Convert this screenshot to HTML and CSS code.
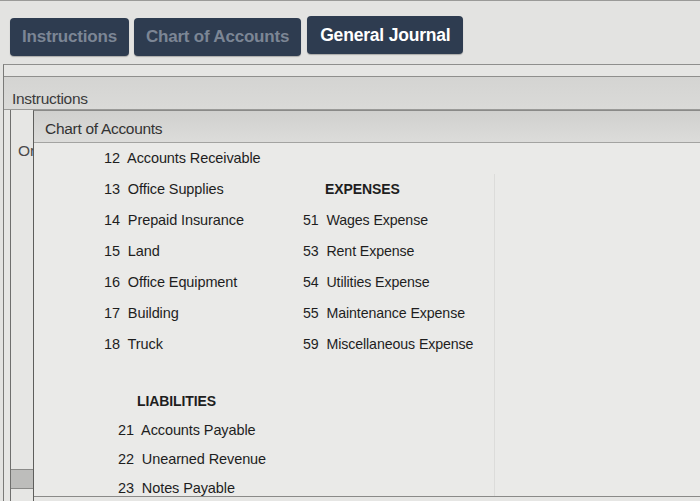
FILE: index.html
```html
<!DOCTYPE html>
<html>
<head>
<meta charset="utf-8">
<link rel="stylesheet" href="styles.css">
</head>
<body>
<div class="topline"></div>
<nav class="tabs">
  <div class="tab">Instructions</div>
  <div class="tab">Chart of Accounts</div>
  <div class="tab active">General Journal</div>
</nav>
<section class="panel">
  <div class="strip"></div>
  <div class="panel-head">Instructions</div>
  <div class="panel-body">
    <div class="instr">
      <p class="instr-text">Or</p>
      <div class="instr-bar"></div>
    </div>
    <div class="chart">
      <div class="chart-head">Chart of Accounts</div>
      <div class="chart-body">
        <div class="col left">
          <div class="row"><span class="num">12</span> Accounts Receivable</div>
          <div class="row"><span class="num">13</span> Office Supplies</div>
          <div class="row"><span class="num">14</span> Prepaid Insurance</div>
          <div class="row"><span class="num">15</span> Land</div>
          <div class="row"><span class="num">16</span> Office Equipment</div>
          <div class="row"><span class="num">17</span> Building</div>
          <div class="row"><span class="num">18</span> Truck</div>
          <div class="group">
            <div class="grow head">LIABILITIES</div>
            <div class="grow"><span class="num">21</span> Accounts Payable</div>
            <div class="grow"><span class="num">22</span> Unearned Revenue</div>
            <div class="grow"><span class="num">23</span> Notes Payable</div>
          </div>
        </div>
        <div class="col right">
          <div class="row head">EXPENSES</div>
          <div class="row"><span class="num">51</span> Wages Expense</div>
          <div class="row"><span class="num">53</span> Rent Expense</div>
          <div class="row"><span class="num">54</span> Utilities Expense</div>
          <div class="row"><span class="num">55</span> Maintenance Expense</div>
          <div class="row"><span class="num">59</span> Miscellaneous Expense</div>
        </div>
        <div class="col rest"></div>
      </div>
    </div>
  </div>
</section>
</body>
</html>
```

FILE: styles.css
```css
html, body {
  margin: 0;
  padding: 0;
  height: 100%;
  overflow: hidden;
}
body {
  background: #e3e3e1;
  font-family: "Liberation Sans", Arial, sans-serif;
  color: #1e1e1e;
}
.topline {
  height: 1px;
  background: #9a9a98;
}
.tabs {
  display: flex;
  gap: 5px;
  padding: 17px 0 0 10px;
  height: 46px;
  box-sizing: content-box;
}
.tab {
  height: 38px;
  line-height: 38px;
  padding: 0 12px;
  background: #2e3c50;
  border-radius: 4px;
  color: #7c8695;
  font-weight: bold;
  font-size: 17px;
  letter-spacing: -0.2px;
  box-shadow: 0 1px 1px rgba(0,0,0,0.25);
}
.tab.active {
  color: #ffffff;
  margin-top: -2px;
  margin-left: 1px;
  padding: 0 13px;
  font-size: 17.5px;
}
.panel {
  margin-left: 3px;
  border-left: 1px solid #7a7a78;
  border-top: 1px solid #8f8f8d;
  display: flex;
  flex-direction: column;
}
.strip {
  height: 11px;
  background: #e6e6e4;
  border-bottom: 1px solid #8f8f8d;
}
.panel-head {
  height: 33px;
  box-sizing: border-box;
  padding: 11px 0 0 8px;
  line-height: 22px;
  font-size: 15.5px;
  color: #3b3b3b;
  background: linear-gradient(#d4d4d2, #dadad8);
  border-bottom: 1px solid #9a9a98;
  letter-spacing: -0.3px;
}
.panel-body {
  position: relative;
  height: 400px;
  background: #e6e6e4;
}
.instr {
  margin-left: 6px;
  height: 100%;
  border-left: 1px solid #6f6f6d;
  display: flex;
  flex-direction: column;
}
.instr-text {
  margin: 32px 0 0 7px;
  font-size: 15.5px;
  color: #4a4a4a;
}
.instr-bar {
  margin-top: 309px;
  height: 18px;
  width: 22px;
  background: #bdbdbb;
  border-top: 1px solid #8a8a88;
  border-bottom: 1px solid #8a8a88;
}
.chart {
  position: absolute;
  left: 29px;
  top: 0;
  right: 0;
  bottom: 0;
  border-left: 1px solid #5e5e5c;
  border-top: 1px solid #8a8a88;
  display: flex;
  flex-direction: column;
}
.chart-head {
  height: 32px;
  box-sizing: border-box;
  padding-left: 11px;
  line-height: 36px;
  font-size: 15.5px;
  color: #333;
  letter-spacing: -0.3px;
  background: linear-gradient(#d0d0ce, #dcdcda);
  border-bottom: 1px solid #a3a3a1;
}
.chart-body {
  display: flex;
  padding-left: 70px;
  background: #eaeae8;
  height: 353px;
  border-bottom: 1px solid #8a8a88;
}
.col {
  display: flex;
  flex-direction: column;
}
.col.left {
  width: 199px;
}
.col.right {
  width: 191px;
  margin-top: 31px;
  border-right: 1px solid #dcdcda;
}
.row, .grow {
  height: 31px;
  line-height: 31px;
  font-size: 14.5px;
  white-space: nowrap;
  letter-spacing: -0.1px;
}
.right .row {
  font-size: 14.2px;
}
.grow {
  height: 29px;
  line-height: 29px;
}
.num {
  margin-right: 4px;
}
.head {
  font-weight: bold;
  font-size: 14px;
}
.right .head {
  padding-left: 22px;
  font-size: 14px;
}
.group {
  margin-top: 27px;
  padding-left: 14px;
}
.group .head {
  padding-left: 19px;
}
```
